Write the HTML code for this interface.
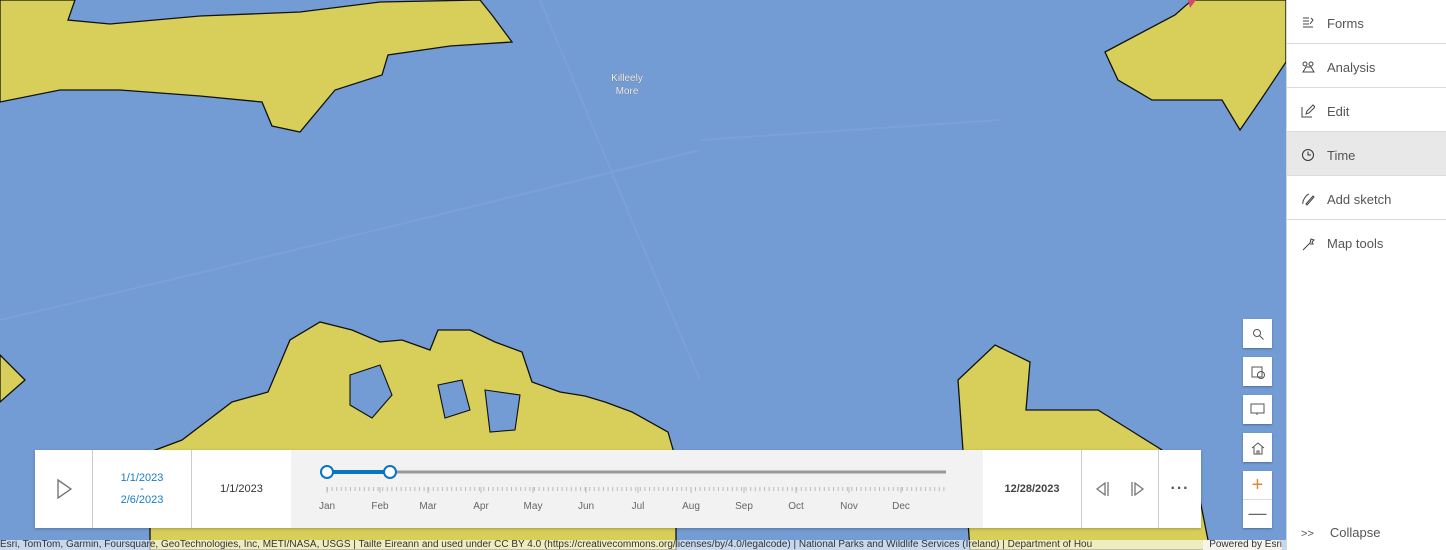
<!DOCTYPE html>
<html><head><meta charset="utf-8"><style>
*{margin:0;padding:0;box-sizing:border-box}
body{width:1446px;height:550px;overflow:hidden;position:relative;font-family:"Liberation Sans",sans-serif;background:#739cd4}
#map{position:absolute;left:0;top:0}
.side{position:absolute;left:1286px;top:0;width:160px;height:550px;background:#fff;border-left:1px solid #d6d6d6}
.item{height:44px;border-bottom:1px solid #dcdcdc;display:flex;align-items:center;padding:3px 0 0 14px;font-size:13px;color:#555}
.item svg{margin-right:12px}
.item.act{background:#e8e8e8}
.panel{position:absolute;left:35px;top:450px;width:1166px;height:78px;background:#fff;box-shadow:0 1px 3px rgba(0,0,0,.25)}
.sec{position:absolute;top:0;height:78px;display:flex;align-items:center;justify-content:center;font-size:11px;color:#333}
.btn{position:absolute;left:1243px;width:29px;height:29px;background:#fff;box-shadow:0 1px 2px rgba(0,0,0,.3);display:flex;align-items:center;justify-content:center}
.attr{position:absolute;left:0;top:540px;width:1286px;height:10px;background:rgba(255,255,255,.6);font-size:10px;line-height:10px;color:#333;white-space:nowrap;overflow:hidden}
.lbl{position:absolute;top:501px;font-size:10px;color:#666;transform:translateX(-50%)}
</style></head><body>
<svg id="map" width="1286" height="550" viewBox="0 0 1286 550">
<g fill="none" stroke="#84a8dc" stroke-width="2" opacity=".5">
<path d="M540 0 L590 120 L640 240 L700 380"/><path d="M0 320 Q300 250 700 150"/><path d="M700 140 L1000 120"/>
</g>
<g fill="#d8cf5a" stroke="#111" stroke-width="1.3">
<path d="M0 0 L75 0 L68 20 L110 24 L200 16 L300 12 L380 2 L480 0 L492 15 L512 42 L450 46 L388 55 L382 75 L335 90 L300 132 L272 126 L262 102 L200 96 L120 90 L60 90 L0 102 Z"/>
<path d="M1105 52 L1175 15 L1192 0 L1286 0 L1286 62 L1262 98 L1240 130 L1222 100 L1152 100 L1118 80 Z"/>
<path d="M0 355 L25 380 L0 402 Z"/>
<path d="M150 452 L182 440 L232 402 L268 392 L290 340 L320 322 L352 330 L380 342 L402 340 L430 350 L438 330 L470 330 L495 342 L522 352 L532 382 L560 392 L585 396 L605 402 L632 412 L668 432 L676 460 L676 550 L150 550 Z"/>
<path d="M958 380 L995 345 L1030 362 L1026 410 L1098 410 L1130 430 L1162 450 L1178 470 L1200 500 L1210 550 L970 550 Z"/>
</g>
<g fill="#739cd4" stroke="#111" stroke-width="1.1">
<path d="M350 375 L380 365 L392 395 L372 418 L350 405 Z"/>
<path d="M438 385 L462 380 L470 410 L445 418 Z"/>
<path d="M485 390 L520 395 L515 430 L490 432 Z"/>
</g>
<path d="M1188 0 L1196 0 L1190 8 Z" fill="#d04a6a"/>
<g font-size="10" fill="#f2f2f2" text-anchor="middle" stroke="#5a6a8a" stroke-width=".5" paint-order="stroke" font-family="Liberation Sans">
<text x="627" y="81">Killeely</text><text x="627" y="94">More</text></g>
</svg>

<div class="side">
<div class="item"><svg width="14" height="14" fill="none" stroke="#444"><path d="M2 2h6M2 5h6M2 8h6M2 11h10M10 2l2 2-3 4"/></svg>Forms</div>
<div class="item"><svg width="14" height="14" fill="none" stroke="#444"><circle cx="4" cy="4" r="2"/><circle cx="10" cy="4" r="2"/><path d="M2 12l3-5h5l3 5z"/></svg>Analysis</div>
<div class="item"><svg width="14" height="14" fill="none" stroke="#444"><path d="M1 3v10h10M5 10l1-3 6-6 2 2-6 6z"/></svg>Edit</div>
<div class="item act"><svg width="14" height="14" fill="none" stroke="#333"><circle cx="7" cy="7" r="5.5"/><path d="M7 3.5V7h3"/></svg>Time</div>
<div class="item"><svg width="14" height="14" fill="none" stroke="#444"><path d="M2 12c-1-3 3-9 6-10M5 12l7-8 1 1-7 8z"/></svg>Add sketch</div>
<div class="item" style="border-bottom:none"><svg width="14" height="14" fill="none" stroke="#444"><path d="M2 13l7-7M9 6l1-4 3 1-2 2 1 2-3 0"/></svg>Map tools</div>
<div style="position:absolute;left:14px;top:525px;font-size:13px;color:#555"><span style="margin-right:16px;font-size:11px">&gt;&gt;</span>Collapse</div>
</div>

<div class="btn" style="top:319px"><svg width="12" height="12" fill="none" stroke="#555"><circle cx="5" cy="5" r="3.5"/><path d="M7.5 7.5l4 4"/></svg></div>
<div class="btn" style="top:357px"><svg width="14" height="14" fill="none" stroke="#555"><rect x="1" y="2" width="10" height="10"/><circle cx="10" cy="10" r="3.5"/></svg></div>
<div class="btn" style="top:395px"><svg width="15" height="13" fill="none" stroke="#555"><rect x="1" y="1" width="13" height="9"/><path d="M7 10v2"/></svg></div>
<div class="btn" style="top:433px"><svg width="14" height="14" fill="none" stroke="#555"><path d="M1 7l6-5 6 5M3 6v7h8V6M6 13v-3h2v3"/></svg></div>
<div class="btn" style="top:471px;height:57px;flex-direction:column"><div style="height:28px;display:flex;align-items:center;font-size:20px;color:#e0883a;border-bottom:1px solid #ddd;width:29px;justify-content:center">+</div><div style="height:28px;display:flex;align-items:center;font-size:18px;color:#666">—</div></div>

<div class="panel">
<div class="sec" style="left:0;width:58px;border-right:1px solid #ccc"><svg width="16" height="20" fill="none" stroke="#777" stroke-width="1.4"><path d="M2 1l13 9-13 9z"/></svg></div>
<div class="sec" style="left:58px;width:99px;border-right:1px solid #ccc;flex-direction:column;color:#1a7cc7;line-height:11px"><div>1/1/2023</div><div>-</div><div>2/6/2023</div></div>
<div class="sec" style="left:157px;width:99px">1/1/2023</div>
<div class="sec" style="left:256px;width:692px;background:#f2f2f2"></div>
<div class="sec" style="left:948px;width:99px;border-right:1px solid #ccc;font-weight:bold;color:#444">12/28/2023</div>
<div class="sec" style="left:1047px;width:77px;border-right:1px solid #ccc;gap:22px"><svg width="14" height="16" fill="none" stroke="#777" stroke-width="1.3"><path d="M10 2L2 8l8 6zM13 1v14"/></svg><svg width="14" height="16" fill="none" stroke="#777" stroke-width="1.3"><path d="M4 2l8 6-8 6zM1 1v14"/></svg></div>
<div class="sec" style="left:1124px;width:42px;font-size:16px;color:#555;font-weight:bold;letter-spacing:1px">···</div>
</div>
<svg style="position:absolute;left:291px;top:460px" width="692" height="40">
<line x1="36" y1="12" x2="655" y2="12" stroke="#999" stroke-width="3"/>
<line x1="36" y1="12" x2="99" y2="12" stroke="#0b74c0" stroke-width="4"/>
<g stroke="#bbb" stroke-width="1">
<path d="M36 27v6M89 27v6M137 27v6M190 27v6M242 27v6M295 27v6M347 27v6M400 27v6M453 27v6M505 27v6M558 27v6M610 27v6"/>
<path d="M36 29H655" stroke-dasharray="1 3.6" stroke-width="4"/>
</g>
<circle cx="36" cy="12" r="6" fill="#fff" stroke="#0b74c0" stroke-width="2"/>
<circle cx="99" cy="12" r="6" fill="#fff" stroke="#0b74c0" stroke-width="2"/>
</svg>
<div class="lbl" style="left:327px">Jan</div><div class="lbl" style="left:380px">Feb</div><div class="lbl" style="left:428px">Mar</div><div class="lbl" style="left:481px">Apr</div><div class="lbl" style="left:533px">May</div><div class="lbl" style="left:586px">Jun</div><div class="lbl" style="left:638px">Jul</div><div class="lbl" style="left:691px">Aug</div><div class="lbl" style="left:744px">Sep</div><div class="lbl" style="left:796px">Oct</div><div class="lbl" style="left:849px">Nov</div><div class="lbl" style="left:901px">Dec</div>

<div class="attr">Esri, TomTom, Garmin, Foursquare, GeoTechnologies, Inc, METI/NASA, USGS | Tailte Éireann and used under CC BY 4.0 (https://creativecommons.org/licenses/by/4.0/legalcode) | National Parks and Wildlife Services (Ireland) | Department of Hou<span style="position:absolute;right:4px;background:#f4f3ec;padding-left:6px">Powered by Esri</span></div>
</body></html>
